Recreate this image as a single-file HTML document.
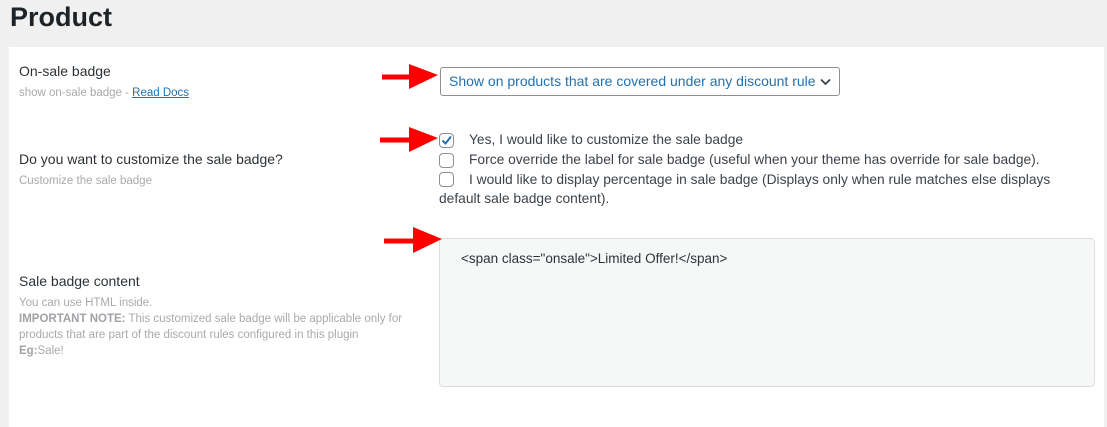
<!DOCTYPE html>
<html><head><meta charset="utf-8"><style>
*{box-sizing:border-box;margin:0;padding:0}
body{width:1107px;height:420px;background:#f0f0f1;font-family:"Liberation Sans",sans-serif;position:relative;overflow:hidden;color:#2c3338}
h1{position:absolute;left:10px;top:2px;font-size:27px;font-weight:bold;color:#1d2327}
.panel{position:absolute;left:9px;top:47px;width:1095px;height:380px;background:#fff}
.a{position:absolute}
.lbl{font-size:14px;color:#2c3338}
.desc{font-size:11.5px;color:#a7aaad;line-height:16px}
.desc b{color:#a0a3a6}
.sel{left:440px;top:67px;width:400px;height:29px;border:1px solid #8c8f94;border-radius:3px;font-size:14px;color:#2271b1;padding:5px 0 0 8px;white-space:nowrap;overflow:hidden;background:#fff}
.selt{display:block;width:366px;overflow:hidden}
.cb{width:15px;height:15px;border:1px solid #8c8f94;border-radius:4px;background:#fff}
.opt{font-size:13.8px;color:#3c434a}
.ta{left:439px;top:238px;width:656px;height:149px;background:#f6f7f7;border:1px solid #dcdcde;border-radius:4px;font-size:13.5px;color:#2c3338;padding:12px 0 0 21px}
</style></head><body>
<h1>Product</h1>
<div class="panel"></div>
<div class="a lbl" style="left:19px;top:63px">On-sale badge</div>
<div class="a desc" style="left:19px;top:85px">show on-sale badge - <span style="color:#2271b1;text-decoration:underline">Read Docs</span></div>
<div class="a sel"><span class="selt">Show on products that are covered under any discount rule</span>
<svg style="position:absolute;right:8px;top:10px" width="11" height="8" viewBox="0 0 11 8"><path d="M1 1.5l4.5 4.5 4.5-4.5" fill="none" stroke="#3c434a" stroke-width="1.8"/></svg></div>
<div class="a lbl" style="left:19px;top:151px">Do you want to customize the sale badge?</div>
<div class="a desc" style="left:19px;top:173px">Customize the sale badge</div>
<div class="a cb" style="left:439px;top:133px"><svg width="15" height="15" viewBox="0 0 15 15" style="position:absolute;left:-1px;top:-1px"><path d="M3.5 7.5l3 3 5.5-7" fill="none" stroke="#2271b1" stroke-width="2"/></svg></div>
<div class="a opt" style="left:469px;top:132px">Yes, I would like to customize the sale badge</div>
<div class="a cb" style="left:439px;top:153px"></div>
<div class="a opt" style="left:469px;top:152px">Force override the label for sale badge (useful when your theme has override for sale badge).</div>
<div class="a cb" style="left:439px;top:172px"></div>
<div class="a opt" style="left:469px;top:172px">I would like to display percentage in sale badge (Displays only when rule matches else displays</div>
<div class="a opt" style="left:439px;top:191px">default sale badge content).</div>
<div class="a lbl" style="left:19px;top:273px">Sale badge content</div>
<div class="a desc" style="left:19px;top:295px;width:410px">You can use HTML inside.<br><b>IMPORTANT NOTE:</b> This customized sale badge will be applicable only for products that are part of the discount rules configured in this plugin<br><b>Eg:</b>Sale!</div>
<div class="a ta">&lt;span class="onsale"&gt;Limited Offer!&lt;/span&gt;</div>
<svg class="a" style="left:380px;top:60px" width="60" height="120" viewBox="0 0 60 120">
<path d="M2 17h30" stroke="#f00" stroke-width="5"/><path d="M29 4L58 15L29 29Z" fill="#f00"/>
<path d="M0 80h30" stroke="#f00" stroke-width="5"/><path d="M29 67L58 78L29 92Z" fill="#f00"/>
</svg>
<svg class="a" style="left:383px;top:225px" width="60" height="30" viewBox="0 0 60 30">
<path d="M1 16h30" stroke="#f00" stroke-width="5"/><path d="M30 2L59 14L30 28Z" fill="#f00"/>
</svg>
</body></html>
